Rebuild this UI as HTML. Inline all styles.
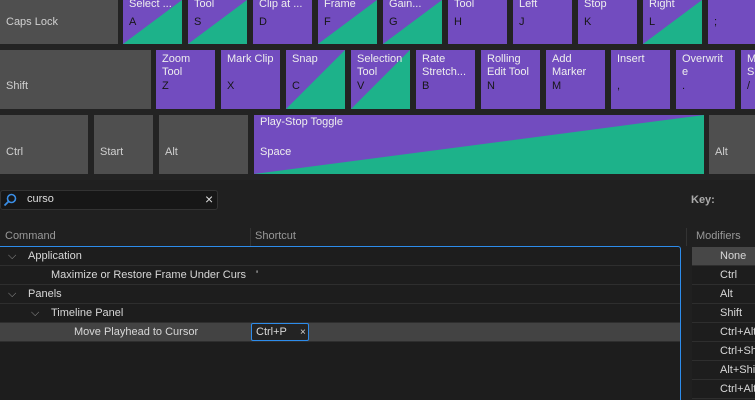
<!DOCTYPE html>
<html><head><meta charset="utf-8"><style>
*{margin:0;padding:0;box-sizing:border-box}
body{width:755px;height:400px;overflow:hidden;background:#232323;font-family:"Liberation Sans",sans-serif;font-size:11px;color:#d8d8d8;position:relative}
.k{position:absolute;background:#4f4f4f;color:#d0d0d0;overflow:hidden}
.p{background:#724cbf;color:#eee}
.k svg{position:absolute;left:0;top:0}
.t{position:absolute;left:6px;line-height:13px;white-space:nowrap}
.l{position:absolute;left:6px;color:#161616}
.g .l{color:#d0d0d0}
.a{position:absolute;white-space:nowrap}
.row{position:absolute;left:0;width:680px;height:19px;border-bottom:1px solid #2e2e2e;line-height:18px}
.m{position:absolute;left:692px;width:63px;height:19px;border-bottom:1px solid #2e2e2e;line-height:18px;padding-left:28px;background:#1d1d1d}
</style></head><body>
<!-- row1 -->
<div class="k g" style="left:0;top:0;width:118px;height:44px"><span class="l" style="top:16px">Caps Lock</span></div>
<div class="k p" style="left:123px;top:0;width:59px;height:44px"><svg width="59" height="44"><polygon points="0,44 59,0 59,44" fill="#1db28a"/></svg><span class="t" style="top:-2px">Select ...</span><span class="l" style="top:16px">A</span></div>
<div class="k p" style="left:188px;top:0;width:59px;height:44px"><svg width="59" height="44"><polygon points="0,44 59,0 59,44" fill="#1db28a"/></svg><span class="t" style="top:-2px">Tool</span><span class="l" style="top:16px">S</span></div>
<div class="k p" style="left:253px;top:0;width:59px;height:44px"><span class="t" style="top:-2px">Clip at ...</span><span class="l" style="top:16px">D</span></div>
<div class="k p" style="left:318px;top:0;width:59px;height:44px"><svg width="59" height="44"><polygon points="0,44 59,0 59,44" fill="#1db28a"/></svg><span class="t" style="top:-2px">Frame</span><span class="l" style="top:16px">F</span></div>
<div class="k p" style="left:383px;top:0;width:59px;height:44px"><svg width="59" height="44"><polygon points="0,44 59,0 59,44" fill="#1db28a"/></svg><span class="t" style="top:-2px">Gain...</span><span class="l" style="top:16px">G</span></div>
<div class="k p" style="left:448px;top:0;width:59px;height:44px"><span class="t" style="top:-2px">Tool</span><span class="l" style="top:16px">H</span></div>
<div class="k p" style="left:513px;top:0;width:59px;height:44px"><span class="t" style="top:-2px">Left</span><span class="l" style="top:16px">J</span></div>
<div class="k p" style="left:578px;top:0;width:59px;height:44px"><span class="t" style="top:-2px">Stop</span><span class="l" style="top:16px">K</span></div>
<div class="k p" style="left:643px;top:0;width:59px;height:44px"><svg width="59" height="44"><polygon points="0,44 59,0 59,44" fill="#1db28a"/></svg><span class="t" style="top:-2px">Right</span><span class="l" style="top:16px">L</span></div>
<div class="k p" style="left:708px;top:0;width:60px;height:44px"><span class="l" style="top:16px">;</span></div>
<!-- row2 -->
<div class="k g" style="left:0;top:50px;width:151px;height:59px"><span class="l" style="top:30px">Shift</span></div>
<div class="k p" style="left:156px;top:50px;width:59px;height:59px"><span class="t" style="top:3px">Zoom<br>Tool</span><span class="l" style="top:30px">Z</span></div>
<div class="k p" style="left:221px;top:50px;width:59px;height:59px"><span class="t" style="top:3px">Mark Clip</span><span class="l" style="top:30px">X</span></div>
<div class="k p" style="left:286px;top:50px;width:59px;height:59px"><svg width="59" height="59"><polygon points="0,59 59,0 59,59" fill="#1db28a"/></svg><span class="t" style="top:3px">Snap</span><span class="l" style="top:30px">C</span></div>
<div class="k p" style="left:351px;top:50px;width:59px;height:59px"><svg width="59" height="59"><polygon points="0,59 59,0 59,59" fill="#1db28a"/></svg><span class="t" style="top:3px">Selection<br>Tool</span><span class="l" style="top:30px">V</span></div>
<div class="k p" style="left:416px;top:50px;width:59px;height:59px"><span class="t" style="top:3px">Rate<br>Stretch...</span><span class="l" style="top:30px">B</span></div>
<div class="k p" style="left:481px;top:50px;width:59px;height:59px"><span class="t" style="top:3px">Rolling<br>Edit Tool</span><span class="l" style="top:30px">N</span></div>
<div class="k p" style="left:546px;top:50px;width:59px;height:59px"><span class="t" style="top:3px">Add<br>Marker</span><span class="l" style="top:30px">M</span></div>
<div class="k p" style="left:611px;top:50px;width:59px;height:59px"><span class="t" style="top:3px">Insert</span><span class="l" style="top:30px">,</span></div>
<div class="k p" style="left:676px;top:50px;width:59px;height:59px"><span class="t" style="top:3px">Overwrit<br>e</span><span class="l" style="top:30px">.</span></div>
<div class="k p" style="left:741px;top:50px;width:30px;height:59px"><span class="t" style="top:3px">M<br>S</span><span class="l" style="top:30px">/</span></div>
<!-- row3 -->
<div class="k g" style="left:0;top:115px;width:88px;height:59px"><span class="l" style="top:31px">Ctrl</span></div>
<div class="k g" style="left:94px;top:115px;width:59px;height:59px"><span class="l" style="top:31px">Start</span></div>
<div class="k g" style="left:159px;top:115px;width:89px;height:59px"><span class="l" style="top:31px">Alt</span></div>
<div class="k p" style="left:254px;top:115px;width:450px;height:59px"><svg width="450" height="59"><polygon points="0,59 450,0 450,59" fill="#1db28a"/></svg><span class="t" style="top:1px">Play-Stop Toggle</span><span class="l" style="top:31px;color:#eee">Space</span></div>
<div class="k g" style="left:709px;top:115px;width:60px;height:59px"><span class="l" style="top:31px">Alt</span></div>
<!-- lower -->
<div style="position:absolute;left:0;top:180px;width:755px;height:220px;background:#202020"></div>
<div style="position:absolute;left:0;top:190px;width:218px;height:20px;background:#171717;border:1px solid #333;border-radius:3px"></div>
<svg style="position:absolute;left:3px;top:193px" width="14" height="14"><circle cx="8.5" cy="5.5" r="4" fill="none" stroke="#3a8ee6" stroke-width="1.6"/><line x1="5.5" y1="8.5" x2="1.5" y2="12.5" stroke="#3a8ee6" stroke-width="1.8"/></svg>
<span class="a" style="left:27px;top:193px;color:#ddd">curso</span>
<span class="a" style="left:205px;top:191px;color:#ddd;font-size:14px">×</span>
<span class="a" style="left:691px;top:194px;color:#aaa;font-weight:bold">Key:</span>
<span class="a" style="left:5px;top:230px;color:#999">Command</span>
<div style="position:absolute;left:250px;top:228px;width:1px;height:18px;background:#333"></div>
<span class="a" style="left:255px;top:230px;color:#999">Shortcut</span>
<div style="position:absolute;left:0;top:246px;width:681px;height:154px;border-top:1px solid #2d8ceb;border-right:1px solid #2d8ceb;border-radius:0 3px 0 0;background:#1d1d1d"></div>
<div class="row" style="top:247px"><span class="a" style="left:8px;color:#999">⌵</span><span class="a" style="left:28px">Application</span></div>
<div class="row" style="top:266px"><span class="a" style="left:51px">Maximize or Restore Frame Under Curs</span><span class="a" style="left:256px">'</span></div>
<div class="row" style="top:285px"><span class="a" style="left:8px;color:#999">⌵</span><span class="a" style="left:28px">Panels</span></div>
<div class="row" style="top:304px"><span class="a" style="left:31px;color:#999">⌵</span><span class="a" style="left:51px">Timeline Panel</span></div>
<div class="row" style="top:323px;background:#434343"><span class="a" style="left:74px">Move Playhead to Cursor</span></div>
<div style="position:absolute;left:251px;top:323px;width:58px;height:18px;border:1px solid #2d8ceb;border-radius:2px;background:#232323;line-height:16px"><span class="a" style="left:4px">Ctrl+P</span><span class="a" style="left:48px;font-size:10px;top:1px">×</span></div>
<div style="position:absolute;left:686px;top:228px;width:1px;height:18px;background:#333"></div>
<span class="a" style="left:696px;top:230px;color:#999">Modifiers</span>
<div class="m" style="top:247px;background:#474747">None</div>
<div class="m" style="top:266px">Ctrl</div>
<div class="m" style="top:285px">Alt</div>
<div class="m" style="top:304px">Shift</div>
<div class="m" style="top:323px">Ctrl+Alt</div>
<div class="m" style="top:342px">Ctrl+Shift</div>
<div class="m" style="top:361px">Alt+Shift</div>
<div class="m" style="top:380px">Ctrl+Alt</div>
</body></html>
